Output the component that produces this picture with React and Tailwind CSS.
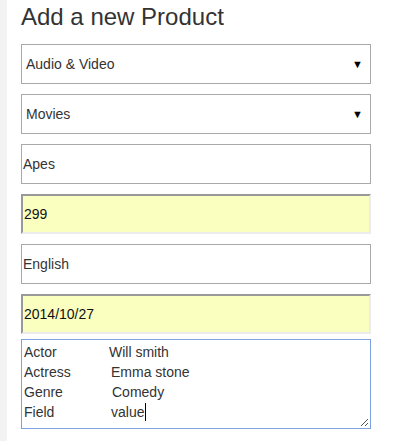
export default function App() {
  const font = { fontFamily: '"Liberation Sans", Arial, sans-serif' };
  const box = "w-[350px] h-[40px] border border-[#a9a9a9] bg-white flex items-center text-[14px] text-[#333]";
  const yellow = "w-[350px] h-[40px] border-2 border-t-[#999999] border-l-[#999999] border-r-[#ececec] border-b-[#ececec] bg-[#fafebf] flex items-center text-[14px] text-[#111] pl-[1px]";
  const rows = [
    ["Actor", "Will smith", 85],
    ["Actress", "Emma stone", 87],
    ["Genre", "Comedy", 88],
    ["Field", "value", 87],
  ];
  return (
    <div className="flex w-[393px] h-[441px] bg-white" style={font}>
      <div className="w-[7px] h-full bg-[#f3f3f3]" />
      <div className="flex flex-col pl-[14px]">
        <h1 className="mt-[3px] mb-[13px] text-[24px] leading-[28px] text-[#333] font-normal">Add a new Product</h1>
        <div className="flex flex-col gap-[10px]">
          <div className={box + " pl-[4px] pr-[7px] justify-between"}>
            <span>Audio &amp; Video</span>
            <span className="text-[11px] text-black">▼</span>
          </div>
          <div className={box + " pl-[4px] pr-[7px] justify-between"}>
            <span>Movies</span>
            <span className="text-[11px] text-black">▼</span>
          </div>
          <div className={box + " pl-[1px]"}>Apes</div>
          <div className={yellow}>299</div>
          <div className={box + " pl-[1px]"}>English</div>
          <div className={yellow}>2014/10/27</div>
        </div>
        <div className="relative mt-[5px] w-[350px] h-[90px] border border-[#7fa3e0] bg-white pt-[2px] pl-[2px] text-[14px] leading-[20px] text-[#333]">
          {rows.map(([k, v, x], i) => (
            <div key={k} className="flex">
              <span className="shrink-0" style={{ width: x + "px" }}>{k}</span>
              <span className="flex items-center">
                {v}
                {i === 3 && <span className="inline-block w-[1px] h-[18px] bg-black ml-[1px]" />}
              </span>
            </div>
          ))}
          <svg className="absolute right-[1px] bottom-[1px]" width="10" height="10" viewBox="0 0 10 10">
            <path d="M9 2 L2 9 M9 6 L6 9" stroke="#555" strokeWidth="1" />
          </svg>
        </div>
      </div>
    </div>
  );
}
